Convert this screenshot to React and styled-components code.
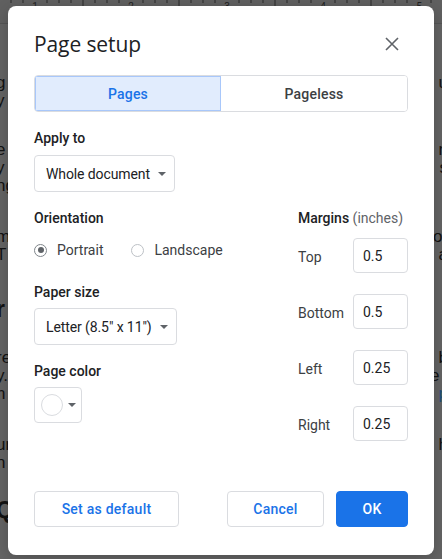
import React, { useState } from 'react'
import styled, { createGlobalStyle } from 'styled-components'

const GlobalStyle = createGlobalStyle`
  html, body {
    margin: 0;
    padding: 0;
  }
  body {
    font-family: Roboto, "Liberation Sans", Arial, sans-serif;
    -webkit-font-smoothing: antialiased;
  }
  * {
    box-sizing: border-box;
  }
`

const Screen = styled.div`
  position: relative;
  width: 442px;
  height: 559px;
  overflow: hidden;
  background: #646464;
`

const Ruler = styled.svg`
  display: block;
  width: 442px;
  height: 24px;
`

const Doc = styled.div`
  padding-top: 50px;
  font-family: "Liberation Sans", Arial, sans-serif;
  font-size: 17px;
  color: #121212;
`

const Para = styled.div`
  margin-bottom: ${({ gap }) => gap || 30}px;
`

const Line = styled.div`
  display: flex;
  justify-content: space-between;
  height: ${({ bold }) => (bold ? 24 : 18)}px;
  line-height: ${({ bold }) => (bold ? 24 : 18)}px;
  margin: 0 -6px 0 -4px;
  font-weight: ${({ bold }) => (bold ? 700 : 400)};
  font-size: ${({ bold }) => (bold ? 23 : 17)}px;
`

const Link = styled.span`
  color: #1f4f7a;
  text-decoration: underline;
`

const Dialog = styled.div`
  position: absolute;
  top: 6px;
  left: 8px;
  width: 426px;
  height: 549px;
  background: #fff;
  border-radius: 8px;
  padding: 24px 26px 0 26px;
  display: flex;
  flex-direction: column;
  box-shadow: 0 4px 16px rgba(0, 0, 0, 0.2);
`

const Header = styled.div`
  display: flex;
  align-items: center;
  justify-content: space-between;
  height: 28px;
`

const Title = styled.h1`
  margin: 0;
  font-family: "Open Sans", Roboto, sans-serif;
  font-size: 21px;
  font-weight: 400;
  color: #202124;
  letter-spacing: -0.1px;
`

const CloseButton = styled.button`
  width: 24px;
  height: 24px;
  margin-right: 4px;
  padding: 0;
  border: none;
  background: none;
  display: flex;
  align-items: center;
  justify-content: center;
  cursor: pointer;
`

const Tabs = styled.div`
  margin-top: 17px;
  display: grid;
  grid-template-columns: 1fr 1fr;
  height: 37px;
  border: 1px solid #dadce0;
  border-radius: 4px;
  overflow: hidden;
`

const Tab = styled.button`
  border: none;
  margin: 0;
  font-family: Roboto, sans-serif;
  font-size: 14px;
  font-weight: 500;
  letter-spacing: 0.2px;
  cursor: pointer;
  background: ${({ active }) => (active ? '#e1ecfd' : '#fff')};
  color: ${({ active }) => (active ? '#1a73e8' : '#3c4043')};
  box-shadow: ${({ active }) => (active ? 'inset 0 0 0 1px #a8c7fa' : 'none')};
`

const Label = styled.div`
  font-size: 14px;
  font-weight: 500;
  color: #202124;
  line-height: 20px;
  margin-top: ${({ top }) => top || 0}px;
`

const Hint = styled.span`
  font-weight: 400;
  color: #5f6368;
`

const Select = styled.button`
  display: inline-flex;
  align-items: center;
  gap: 8px;
  align-self: flex-start;
  height: 37px;
  padding: 0 8px 0 11px;
  margin-top: ${({ top }) => top || 7}px;
  border: 1px solid #dadce0;
  border-radius: 4px;
  background: #fff;
  font-family: Roboto, sans-serif;
  font-size: 14px;
  letter-spacing: -0.1px;
  color: #202124;
  cursor: pointer;
`

const Caret = styled.span`
  width: 0;
  height: 0;
  border-left: 4px solid transparent;
  border-right: 4px solid transparent;
  border-top: 4px solid #5f6368;
`

const Columns = styled.div`
  display: grid;
  grid-template-columns: 1fr 110px;
  margin-top: 16px;
`

const Column = styled.div`
  display: flex;
  flex-direction: column;
`

const RadioRow = styled.div`
  display: flex;
  gap: 28px;
  margin-top: 12px;
  height: 20px;
`

const RadioOption = styled.label`
  display: flex;
  align-items: center;
  gap: 10px;
  font-size: 14px;
  color: #3c4043;
  cursor: pointer;
`

const RadioCircle = styled.span`
  width: 13px;
  height: 13px;
  border-radius: 50%;
  border: 1px solid ${({ checked }) => (checked ? '#80868b' : '#bdc1c6')};
  display: flex;
  align-items: center;
  justify-content: center;
  &::after {
    content: '';
    width: 6px;
    height: 6px;
    border-radius: 50%;
    background: ${({ checked }) => (checked ? '#5f6368' : 'transparent')};
  }
`

const ColorButton = styled.button`
  display: inline-flex;
  align-items: center;
  gap: 5px;
  align-self: flex-start;
  width: 48px;
  height: 36px;
  margin-top: 6px;
  padding: 0 0 0 6px;
  border: 1px solid #dadce0;
  border-radius: 4px;
  background: #fff;
  cursor: pointer;
`

const Swatch = styled.span`
  width: 22px;
  height: 22px;
  border-radius: 50%;
  border: 1px solid #dadce0;
  background: ${({ color }) => color};
`

const MarginList = styled.div`
  display: flex;
  flex-direction: column;
  gap: 21px;
  margin-top: 10px;
`

const MarginRow = styled.div`
  display: flex;
  align-items: center;
  justify-content: space-between;
  height: 35px;
`

const MarginLabel = styled.span`
  font-size: 14px;
  color: #3c4043;
  padding-top: 2px;
`

const MarginInput = styled.input`
  width: 55px;
  height: 35px;
  padding: 0 0 0 9px;
  border: 1px solid #dadce0;
  border-radius: 4px;
  font-family: Roboto, sans-serif;
  font-size: 14px;
  color: #202124;
  outline: none;
`

const Footer = styled.div`
  display: flex;
  align-items: center;
  margin-top: 50px;
  gap: 12px;
`

const Button = styled.button`
  height: 36px;
  width: ${({ w }) => w}px;
  margin-right: ${({ push }) => (push ? 'auto' : '0')};
  border-radius: 4px;
  font-family: Roboto, sans-serif;
  font-size: 14px;
  font-weight: 500;
  letter-spacing: 0.25px;
  cursor: pointer;
  border: 1px solid ${({ primary }) => (primary ? '#1a73e8' : '#dadce0')};
  background: ${({ primary }) => (primary ? '#1a73e8' : '#fff')};
  color: ${({ primary }) => (primary ? '#fff' : '#1a73e8')};
`

const paragraphs = [
  { gap: 31, lines: [['g l', 'u'], ['y', '']] },
  { gap: 33, lines: [['e', 'n'], ['y', 's'], ['ng', '']] },
  { gap: 33, lines: [['m', 'or'], ['T', 'a']] },
]

const RulerDrawing = () => {
  const ticks = []
  for (let i = -4; i < 48; i++) {
    const x = 35 + i * 12
    const half = i % 4 === 0
    if (i % 8 === 0) continue
    ticks.push(
      <line
        key={i}
        x1={x}
        x2={x}
        y1={0}
        y2={half ? 6 : 3}
        stroke="#2a2a2a"
        strokeWidth="1"
      />
    )
  }
  return (
    <Ruler viewBox="0 0 442 24">
      <rect x="0" y="0" width="442" height="24" fill="#606060" />
      <line x1="0" x2="442" y1="23.5" y2="23.5" stroke="#555" />
      {ticks}
      {[1, 2, 3, 4, 5].map((n, i) => (
        <text
          key={n}
          x={35 + i * 96}
          y="10"
          fontSize="10"
          fill="#222"
          textAnchor="middle"
          fontFamily="Roboto, sans-serif"
        >
          {n}
        </text>
      ))}
    </Ruler>
  )
}

const margins = [
  { name: 'Top', value: '0.5' },
  { name: 'Bottom', value: '0.5' },
  { name: 'Left', value: '0.25' },
  { name: 'Right', value: '0.25' },
]

const App = () => {
  const [mode, setMode] = useState('pages')
  const [orientation, setOrientation] = useState('portrait')

  return (
    <Screen>
      <GlobalStyle />
      <RulerDrawing />
      <Doc>
        {paragraphs.map((p, pi) => (
          <Para key={pi} gap={p.gap}>
            {p.lines.map(([l, r], i) => (
              <Line key={i}><span>{l}</span><span>{r}</span></Line>
            ))}
          </Para>
        ))}
        <Para gap={28}>
          <Line bold><span>r</span><span></span></Line>
        </Para>
        <Para gap={33}>
          <Line><span>re</span><span>b</span></Line>
          <Line><span>y.</span><span>e l</span></Line>
          <Line><span>h</span><Link>p</Link></Line>
        </Para>
        <Para gap={26}>
          <Line><span>ur</span><span>h</span></Line>
          <Line><span>n</span><span></span></Line>
        </Para>
        <Para>
          <Line bold><span>Q</span><span></span></Line>
        </Para>
      </Doc>

      <Dialog>
        <Header>
          <Title>Page setup</Title>
          <CloseButton aria-label="Close">
            <svg width="14" height="14" viewBox="0 0 14 14">
              <path d="M1 1L13 13M13 1L1 13" stroke="#5f6368" strokeWidth="1.6" />
            </svg>
          </CloseButton>
        </Header>

        <Tabs>
          <Tab active={mode === 'pages'} onClick={() => setMode('pages')}>Pages</Tab>
          <Tab active={mode === 'pageless'} onClick={() => setMode('pageless')}>Pageless</Tab>
        </Tabs>

        <Label top={16}>Apply to</Label>
        <Select>
          Whole document
          <Caret />
        </Select>

        <Columns>
          <Column>
            <Label>Orientation</Label>
            <RadioRow>
              <RadioOption onClick={() => setOrientation('portrait')}>
                <RadioCircle checked={orientation === 'portrait'} />
                Portrait
              </RadioOption>
              <RadioOption onClick={() => setOrientation('landscape')}>
                <RadioCircle checked={orientation === 'landscape'} />
                Landscape
              </RadioOption>
            </RadioRow>

            <Label top={22}>Paper size</Label>
            <Select top={6}>
              Letter (8.5" x 11")
              <Caret />
            </Select>

            <Label top={16}>Page color</Label>
            <ColorButton aria-label="Page color">
              <Swatch color="#fff" />
              <Caret />
            </ColorButton>
          </Column>

          <Column>
            <Label>
              Margins <Hint>(inches)</Hint>
            </Label>
            <MarginList>
              {margins.map((m) => (
                <MarginRow key={m.name}>
                  <MarginLabel>{m.name}</MarginLabel>
                  <MarginInput defaultValue={m.value} />
                </MarginRow>
              ))}
            </MarginList>
          </Column>
        </Columns>

        <Footer>
          <Button w={145} push>Set as default</Button>
          <Button w={97}>Cancel</Button>
          <Button w={72} primary>OK</Button>
        </Footer>
      </Dialog>
    </Screen>
  )
}

export default App
